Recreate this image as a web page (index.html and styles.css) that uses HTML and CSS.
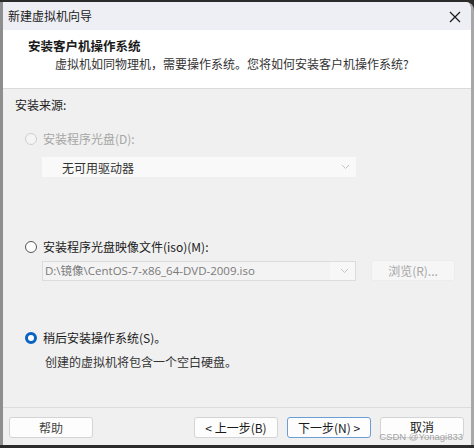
FILE: index.html
```html
<!DOCTYPE html>
<html lang="zh-CN">
<head>
<meta charset="utf-8">
<link rel="stylesheet" href="styles.css">
</head>
<body>
<div class="window">
  <div class="titlebar">
    <span class="title">新建虚拟机向导</span>
    <svg class="close" width="12" height="12" viewBox="0 0 12 12"><path d="M1 1 L11 11 M11 1 L1 11" stroke="#1a1a1a" stroke-width="1.2" fill="none"/></svg>
  </div>
  <div class="header">
    <div class="h-title">安装客户机操作系统</div>
    <div class="h-sub">虚拟机如同物理机，需要操作系统。您将如何安装客户机操作系统?</div>
  </div>
  <div class="content">
    <div class="section-label">安装来源:</div>
    <div class="option opt1">
      <span class="radio disabled"></span>
      <span class="label disabled-text">安装程序光盘(D):</span>
    </div>
    <div class="select disabled-select">
      <span class="select-text">无可用驱动器</span>
      <svg class="chev" width="9" height="6" viewBox="0 0 9 6"><path d="M1 1 L4.5 4.5 L8 1" stroke="#c4c4c4" stroke-width="1" fill="none"/></svg>
    </div>
    <div class="option opt2">
      <span class="radio"></span>
      <span class="label">安装程序光盘映像文件(iso)(M):</span>
    </div>
    <div class="iso-row">
      <div class="select combo">
        <span class="combo-field">D:\镜像\CentOS-7-x86_64-DVD-2009.iso</span>
        <svg class="chev" width="9" height="6" viewBox="0 0 9 6"><path d="M1 1 L4.5 4.5 L8 1" stroke="#c4c4c4" stroke-width="1" fill="none"/></svg>
      </div>
      <div class="btn browse">浏览(R)...</div>
    </div>
    <div class="option opt3">
      <span class="radio checked"></span>
      <span class="label">稍后安装操作系统(S)。</span>
    </div>
    <div class="desc">创建的虚拟机将包含一个空白硬盘。</div>
  </div>
  <div class="footer">
    <div class="btn help">帮助</div>
    <div class="spacer"></div>
    <div class="btn">&lt; 上一步(B)</div>
    <div class="btn primary">下一步(N) &gt;</div>
    <div class="btn cancel"><span class="cancel-text">取消</span><span class="watermark">CSDN @Yonagi833</span></div>
  </div>
</div>
</body>
</html>
```
FILE: styles.css
```css
* { box-sizing: border-box; }
html, body { margin: 0; padding: 0; }
body {
  width: 474px;
  height: 448px;
  background: #2b2b2b;
  font-family: "Noto Sans CJK SC", "Microsoft YaHei", sans-serif;
  font-size: 12px;
  color: #1a1a1a;
  padding-top: 2px;
  overflow: hidden;
}
.window {
  width: 474px;
  height: 443px;
  border-left: 3px solid #8e8e8e;
  border-right: 3px solid #a8a8a8;
  border-top-right-radius: 8px;
  background: #f0f0f0;
  display: flex;
  flex-direction: column;
  overflow: hidden;
}
.titlebar {
  height: 28px;
  background: #eeeff4;
  display: flex;
  align-items: center;
  justify-content: space-between;
  padding: 0 10px 0 5px;
}
.title { font-size: 12px; color: #1a1a1a; line-height: 16px; }
.close { margin-top: 1px; }
.header {
  height: 59px;
  background: #ffffff;
  border-bottom: 1px solid #dadada;
  padding: 7px 0 0 25px;
}
.h-title { font-weight: bold; line-height: 18px; font-size: 12.5px; }
.h-sub { line-height: 18px; padding-left: 27px; color: #333; }
.content {
  flex: 1;
  padding: 7px 0 0 12px;
  display: flex;
  flex-direction: column;
  align-items: flex-start;
}
.section-label { line-height: 18px; color: #222; }
.option {
  display: flex;
  align-items: center;
  gap: 6px;
  margin-left: 10px;
  line-height: 18px;
}
.opt1 { margin-top: 16px; }
.opt2 { margin-top: 61px; }
.opt3 { margin-top: 48px; }
.radio {
  width: 12px;
  height: 12px;
  border: 1px solid #555;
  border-radius: 50%;
  background: #fdfdfd;
  flex: none;
}
.radio.disabled { border-color: #cfcfcf; background: #f4f4f4; }
.radio.checked { border: 3.5px solid #0863c2; background: #fff; }
.disabled-text { color: #a6a6a6; }
.select {
  margin-left: 27px;
  height: 20px;
  width: 314px;
  display: flex;
  align-items: center;
  justify-content: space-between;
  padding: 0 6px 0 0;
}
.disabled-select {
  margin-top: 9px;
  background: #f9f9f9;
}
.select-text { padding-left: 20px; color: #333; }
.iso-row {
  margin-top: 4px;
  display: flex;
  gap: 15px;
  align-items: center;
}
.combo {
  background: #f7f7f7;
  border: 1px solid #dcdcdc;
  padding: 0 6px 0 0;
}
.combo-field {
  flex: 1;
  height: 18px;
  line-height: 18px;
  padding-left: 2px;
  margin-right: 10px;
  background: #f3f3f3;
  color: #7a7a7a;
  font-family: "Open Sans", "Noto Sans CJK SC", sans-serif;
  font-size: 11.5px;
  white-space: nowrap;
}
.btn {
  height: 21px;
  width: 84px;
  display: flex;
  align-items: center;
  justify-content: center;
  background: #fdfdfd;
  border: 1px solid #d4d4d4;
  border-radius: 3px;
  color: #1a1a1a;
  font-size: 12px;
}
.browse {
  border-color: #ececec;
  background: #f6f6f6;
  color: #a6a6a6;
}
.desc { margin-left: 30px; margin-top: 6px; line-height: 18px; color: #333; }
.footer {
  height: 38px;
  border-top: 1px solid #dcdcdc;
  display: flex;
  align-items: flex-start;
  padding: 9px 7px 0 6px;
  gap: 9px;
}
.help { color: #444; }
.spacer { flex: 1; }
.primary { border-color: #6a9fd6; }
.cancel { position: relative; align-items: flex-start; }
.cancel-text { line-height: 16px; margin-top: 1px; }
.watermark {
  position: absolute;
  right: 0;
  top: 13px;
  font-family: "Liberation Sans", sans-serif;
  font-size: 9.5px;
  line-height: 11px;
  color: rgba(140, 140, 140, 0.8);
  white-space: nowrap;
}
```
